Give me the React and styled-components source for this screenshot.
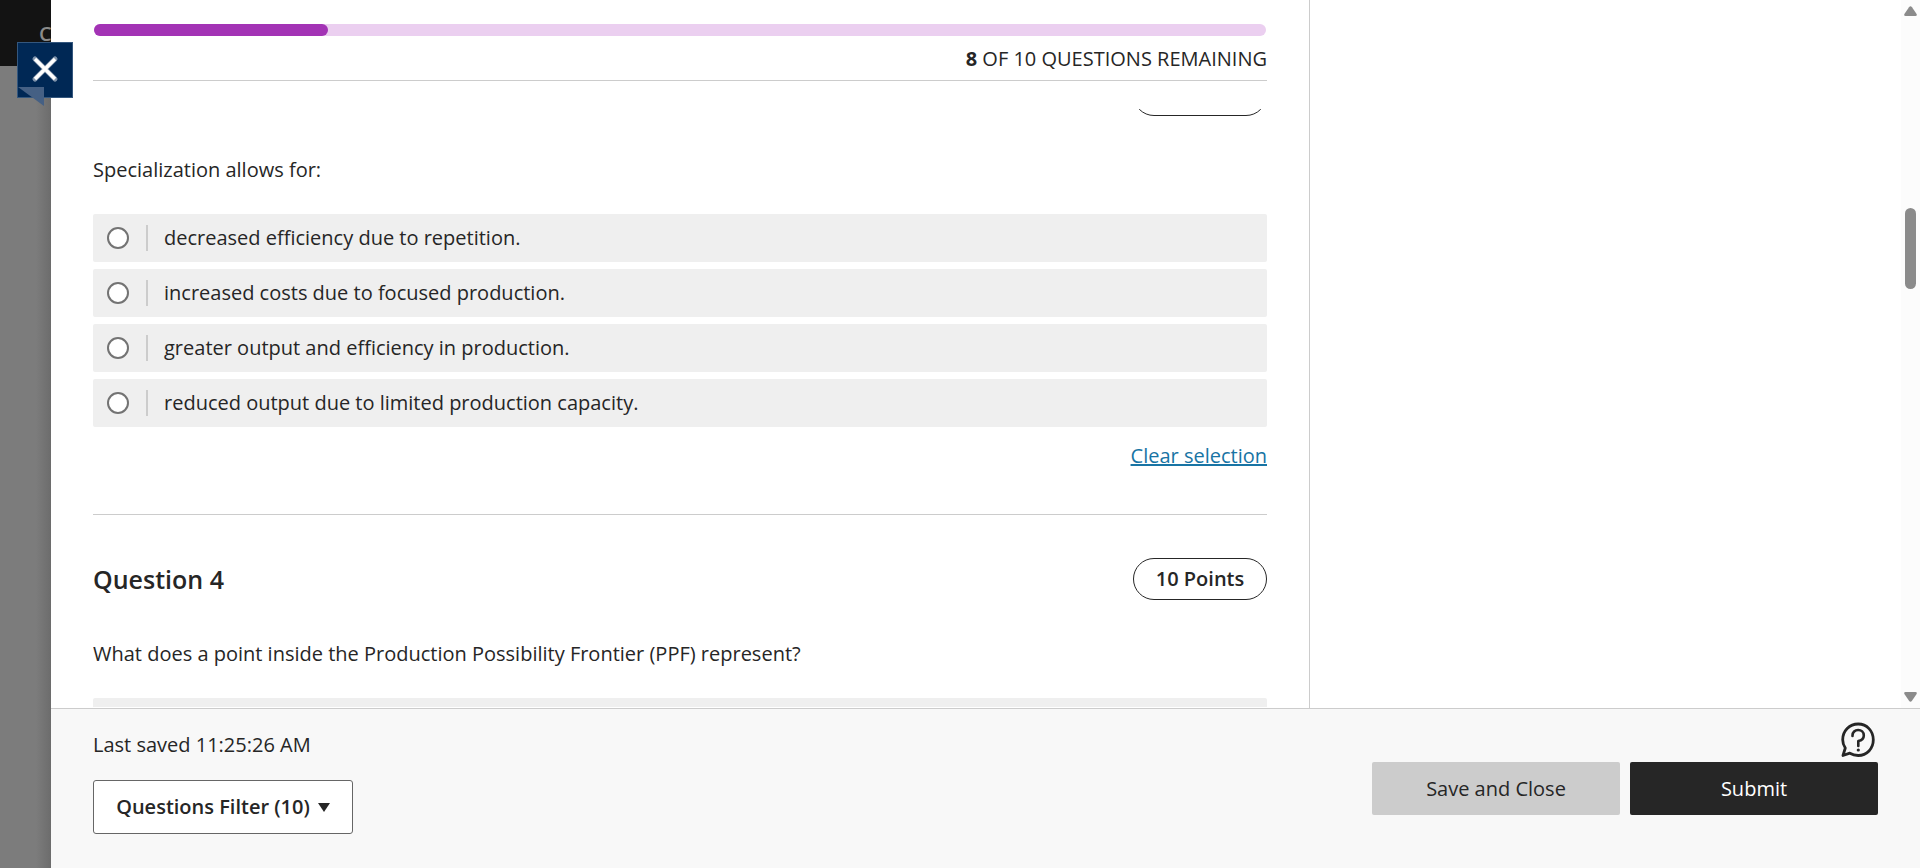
import React, { useLayoutEffect, useRef } from "react";
import styled, { createGlobalStyle } from "styled-components";

const GlobalStyle = createGlobalStyle`
  *, *::before, *::after {
    box-sizing: border-box;
  }

  body {
    margin: 0;
    background-color: #7c7c7c;
    color: #262626;
    font-family: "Open Sans", "Noto Sans", sans-serif;
    font-size: 20px;
    line-height: 28px;
  }

  button, input {
    margin: 0;
    font: inherit;
    color: inherit;
  }
`;

const Page = styled.div`
  position: relative;
  display: flex;
  height: 100vh;
  overflow: hidden;
`;

const Backdrop = styled.div`
  flex: 0 0 51px;
  overflow: hidden;
  background: linear-gradient(90deg, #7c7c7c 36px, #6c6c6c 51px);
`;

const BackdropBar = styled.div`
  height: 66px;
  padding: 20px 0 0 39px;
  background-color: #131313;
  color: #8a8a8a;
  font-weight: 600;
`;

const Panel = styled.div`
  flex: 1;
  display: flex;
  flex-direction: column;
  min-width: 0;
  background-color: #ffffff;
`;

const Main = styled.main`
  flex: 1;
  display: grid;
  grid-template-columns: minmax(0, 1259fr) minmax(0, 591fr) 19px;
  grid-template-rows: minmax(0, 1fr);
  min-height: 0;
`;

const Content = styled.div`
  display: flex;
  flex-direction: column;
  padding: 0 42px 1px;
  border-right: 1px solid #cccccc;
`;

const Side = styled.div`
  background-color: #ffffff;
`;

const Status = styled.div`
  padding-top: 24px;
  border-bottom: 1px solid #cccccc;
  text-align: right;
  text-transform: uppercase;
`;

const Track = styled.div`
  height: 12px;
  margin: 0 1px;
  border-radius: 6px;
  background-color: #ebcff0;
`;

const Fill = styled.div`
  height: 100%;
  border-radius: 6px;
  background-color: #a333b5;
`;

const Remaining = styled.p`
  margin: 9px 0 7px;
`;

const Questions = styled.div`
  flex: 1;
  min-height: 0;
  margin-top: 28px;
  overflow: hidden;
`;

const Question = styled.section`
  & + & {
    margin-top: 44px;
    border-top: 1px solid #cccccc;
    padding-top: 43px;
  }
`;

const QuestionHead = styled.div`
  display: flex;
  align-items: center;
  justify-content: space-between;
`;

const Title = styled.h2`
  margin: 0;
  font-size: 25px;
  font-weight: 600;
`;

const Points = styled.span`
  width: 134px;
  height: 42px;
  margin-left: auto;
  padding: 6px 0;
  border: 1px solid #262626;
  border-radius: 21px;
  font-weight: 600;
  text-align: center;
`;

const Prompt = styled.p`
  margin: 40px 0 30px;
`;

const Options = styled.div`
  display: grid;
  gap: 7px;
`;

const Option = styled.label`
  display: flex;
  align-items: center;
  min-height: 48px;
  padding: 0 14px;
  border-radius: 2px;
  background-color: #efefef;
`;

const Radio = styled.input`
  appearance: none;
  width: 22px;
  height: 22px;
  border: 2px solid #737373;
  border-radius: 50%;
  background-color: #ffffff;

  &:checked {
    border-width: 7px;
  }
`;

const OptionText = styled.span`
  display: flex;
  align-items: center;

  &::before {
    content: "";
    width: 2px;
    height: 26px;
    margin: 0 16px 0 17px;
    background-color: #cccccc;
  }
`;

const Actions = styled.div`
  display: flex;
  justify-content: flex-end;
  margin-top: 15px;
`;

const LinkButton = styled.button`
  padding: 0;
  border: 0;
  background: none;
  color: #1874a4;
  text-decoration: underline;
`;

const Scrollbar = styled.div`
  display: flex;
  flex-direction: column;
  align-items: center;
  padding: 6px 0 6px;
  background-color: #fcfcfc;

  svg {
    flex: none;
    display: block;
  }
`;

const Thumb = styled.div`
  width: 11px;
  height: 81px;
  margin: 192px 0 auto;
  border-radius: 6px;
  background-color: #8b8b8b;
`;

const Footer = styled.footer`
  display: flex;
  justify-content: space-between;
  min-height: 160px;
  padding: 22px 42px 33px;
  border-top: 1px solid #cccccc;
  background-color: #f8f8f8;
`;

const Saved = styled.p`
  margin: 0 0 21px;
`;

const FilterButton = styled.button`
  display: flex;
  align-items: center;
  justify-content: center;
  gap: 8px;
  width: 260px;
  height: 54px;
  padding: 0;
  border: 1px solid #666666;
  border-radius: 3px;
  background-color: #ffffff;
  font-weight: 600;
`;

const FooterRight = styled.div`
  display: flex;
  flex-direction: column;
  align-items: flex-end;
  margin-top: -9px;
`;

const HelpButton = styled.button`
  height: 39px;
  padding: 0 3px 5px 0;
  border: 0;
  background: none;

  svg {
    display: block;
  }
`;

const Buttons = styled.div`
  display: flex;
  gap: 10px;
  margin-top: 1px;
`;

const ActionButton = styled.button`
  width: 248px;
  height: 53px;
  padding: 0;
  border: 0;
  border-radius: 2px;
  background-color: ${props => (props.$primary ? "#262626" : "#cccccc")};
  color: ${props => (props.$primary ? "#ffffff" : "#262626")};
`;

// Hangs over the panel's left edge
const CloseButton = styled.button`
  position: absolute;
  top: 42px;
  left: 17px;
  width: 56px;
  height: 64px;
  padding: 0;
  border: 0;
  background: none;

  svg {
    display: block;
  }
`;

const questions = [
  {
    id: 3,
    prompt: "Specialization allows for:",
    options: [
      "decreased efficiency due to repetition.",
      "increased costs due to focused production.",
      "greater output and efficiency in production.",
      "reduced output due to limited production capacity."
    ]
  },
  {
    id: 4,
    title: "Question 4",
    points: "10 Points",
    prompt:
      "What does a point inside the Production Possibility Frontier (PPF) represent?",
    options: [""]
  }
];

const total = 10;
const remaining = 8;

function QuestionItem({ id, title, points, prompt, options }) {
  return (
    <Question>
      <QuestionHead>
        {title && <Title>{title}</Title>}
        <Points>{points}</Points>
      </QuestionHead>
      <Prompt>{prompt}</Prompt>
      <Options>
        {options.map(text =>
          text ? (
            <Option key={text}>
              <Radio type="radio" name={`question-${id}`} />
              <OptionText>{text}</OptionText>
            </Option>
          ) : (
            <Option as="div" key="blank" />
          )
        )}
      </Options>
      {options.length > 1 && (
        <Actions>
          <LinkButton type="button">Clear selection</LinkButton>
        </Actions>
      )}
    </Question>
  );
}

export default function App() {
  const list = useRef(null);

  useLayoutEffect(() => {
    list.current.scrollTop = 35;
  }, []);

  return (
    <Page>
      <GlobalStyle />
      <Backdrop>
        <BackdropBar>C</BackdropBar>
      </Backdrop>
      <Panel>
        <Main>
          <Content>
            <Status>
              <Track>
                <Fill style={{ width: `${((total - remaining) / total) * 100}%` }} />
              </Track>
              <Remaining>
                <strong>{remaining}</strong> of {total} questions remaining
              </Remaining>
            </Status>
            <Questions ref={list}>
              {questions.map(question => (
                <QuestionItem key={question.id} {...question} />
              ))}
            </Questions>
          </Content>
          <Side />
          <Scrollbar>
            <svg width="13" height="10" viewBox="0 0 13 10" fill="#8b8b8b">
              <path d="M5 1.2Q6.5-.8 8 1.2L12.6 8Q13.3 10 11.5 10H1.5Q-.3 10 .4 8Z" />
            </svg>
            <Thumb />
            <svg width="13" height="10" viewBox="0 0 13 10" fill="#8b8b8b">
              <path d="M5 8.8Q6.5 10.8 8 8.8L12.6 2Q13.3 0 11.5 0H1.5Q-.3 0 .4 2Z" />
            </svg>
          </Scrollbar>
        </Main>
        <Footer>
          <div>
            <Saved>Last saved 11:25:26 AM</Saved>
            <FilterButton type="button">
              Questions Filter (10)
              <svg width="12" height="9" viewBox="0 0 12 9" fill="#262626">
                <path d="M0 0H12L6 9Z" />
              </svg>
            </FilterButton>
          </div>
          <FooterRight>
            <HelpButton type="button" aria-label="Help">
              <svg width="34" height="36" viewBox="0 0 34 36" fill="none" stroke="#262626">
                <path
                  d="M2 33.5L4.3 26C2.6 23.500 1.700 20.500 1.700 17.800C1.700 9 8.500 2 17.200 2C25.900 2 32.300 9 32.300 17.800C32.300 26.600 25.900 33.500 17.200 33.500C14 33.500 11.200 32.600 8.800 31.200Z"
                  strokeWidth="2.8"
                  strokeLinejoin="round"
                />
                <path
                  d="M11.5 14V13.500C11.500 10.300 14 8 17.100 8C20.300 8 22.800 10.300 22.800 13.400C22.800 16.300 20.900 18.200 17.300 19V24"
                  strokeWidth="2.6"
                  strokeLinecap="round"
                  strokeLinejoin="round"
                />
                <circle cx="17.300" cy="28" r="1.600" fill="#262626" stroke="none" />
              </svg>
            </HelpButton>
            <Buttons>
              <ActionButton type="button">Save and Close</ActionButton>
              <ActionButton type="button" $primary>
                Submit
              </ActionButton>
            </Buttons>
          </FooterRight>
        </Footer>
      </Panel>
      <CloseButton type="button" aria-label="Close">
        <svg width="56" height="64" viewBox="0 0 56 64" fill="none">
          <rect x=".5" y=".5" width="55" height="55" fill="#002855" stroke="#34577e" />
          <path d="M1 45H27V64Z" fill="#456084" />
          <path
            d="M18 17L38 37M38 17L18 37"
            stroke="#7f93aa"
            strokeWidth="5"
            strokeLinecap="round"
          />
          <path d="M18 17L38 37M38 17L18 37" stroke="#ffffff" strokeWidth="3.4" />
        </svg>
      </CloseButton>
    </Page>
  );
}
